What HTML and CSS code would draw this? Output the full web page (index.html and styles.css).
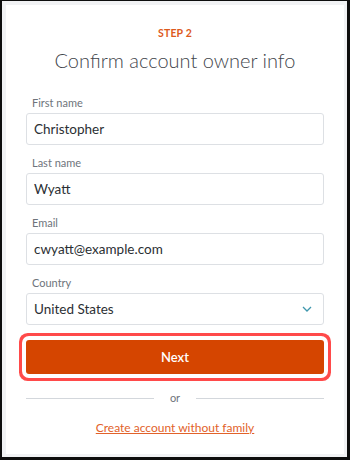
FILE: index.html
```html
<!DOCTYPE html>
<html>
  <head>
    <meta charset="utf-8">
    <title>Confirm account owner info</title>
    <link rel="stylesheet" href="styles.css">
  </head>
  <body>
    <div class="frame">
      <div class="card">
        <div class="step">STEP 2</div>
        <h1 class="title">Confirm account owner info</h1>

        <form class="form">
          <div class="field">
            <label class="label">First name</label>
            <div class="input">Christopher</div>
          </div>
          <div class="field">
            <label class="label">Last name</label>
            <div class="input">Wyatt</div>
          </div>
          <div class="field">
            <label class="label">Email</label>
            <div class="input">cwyatt@example.com</div>
          </div>
          <div class="field">
            <label class="label">Country</label>
            <div class="input select">
              <span>United States</span>
              <svg class="chevron" width="10" height="6" viewBox="0 0 10 6">
                <path d="M1 1 L5 5 L9 1" fill="none" stroke="#3f97ad" stroke-width="1.3"/>
              </svg>
            </div>
          </div>

          <button type="button" class="next">Next</button>
        </form>

        <div class="divider"><span>or</span></div>
        <a class="skip" href="#">Create account without family</a>
      </div>
    </div>
  </body>
</html>
```

FILE: styles.css
```css
* {
    box-sizing: border-box;
}
html, body {
    margin: 0;
    padding: 0;
}
body {
    font-family: Lato, "Open Sans", sans-serif;
    color: #2b2f33;
}
.frame {
    width: 350px;
    height: 460px;
    border-style: solid;
    border-color: #0d0d0d;
    border-width: 1px 3px 3px 2px;
    background: #f1f2f4;
    padding: 4px 3px 3px 4px;
}
.card {
    height: 100%;
    background: #fff;
    padding: 21px 20px 0;
    display: flex;
    flex-direction: column;
}
.step {
    text-align: center;
    font-size: 10.5px;
    font-weight: 700;
    letter-spacing: 0.2px;
    color: #dd5a1c;
    line-height: 14px;
}
.title {
    margin: 7px 0 0;
    text-align: center;
    font-size: 20px;
    font-weight: 300;
    color: #3f454c;
    line-height: 26px;
}
.form {
    display: flex;
    flex-direction: column;
    margin-top: 13px;
}
.field {
    display: flex;
    flex-direction: column;
    margin-top: 11px;
}
.field:first-child {
    margin-top: 10px;
}
.label {
    font-size: 11px;
    line-height: 14px;
    color: #6e747b;
    padding-left: 6px;
    margin-bottom: 3px;
}
.input {
    height: 32px;
    border: 1px solid #dde0e4;
    border-radius: 3px;
    padding: 0 7px;
    font-size: 13.5px;
    line-height: 30px;
    color: #2b2f33;
}
.select {
    display: flex;
    align-items: center;
    justify-content: space-between;
    padding-right: 11px;
}
.chevron {
    display: block;
}
.next {
    margin-top: 15px;
    height: 34px;
    border: none;
    border-radius: 3px;
    background: #d54500;
    color: #fff;
    font-family: Lato, "Open Sans", sans-serif;
    font-size: 13px;
    font-weight: 600;
    box-shadow: 0 0 0 4px #fff, 0 0 0 7px #ff4a4a;
}
.divider {
    display: flex;
    align-items: center;
    gap: 16px;
    margin-top: 17px;
    font-size: 11px;
    color: #6e747b;
    line-height: 14px;
}
.divider::before,
.divider::after {
    content: '';
    flex: 1;
    height: 1px;
    background: #d3d7dc;
}
.skip {
    margin-top: 15px;
    align-self: center;
    font-size: 12px;
    color: #e2622a;
    text-decoration: underline;
}
```
